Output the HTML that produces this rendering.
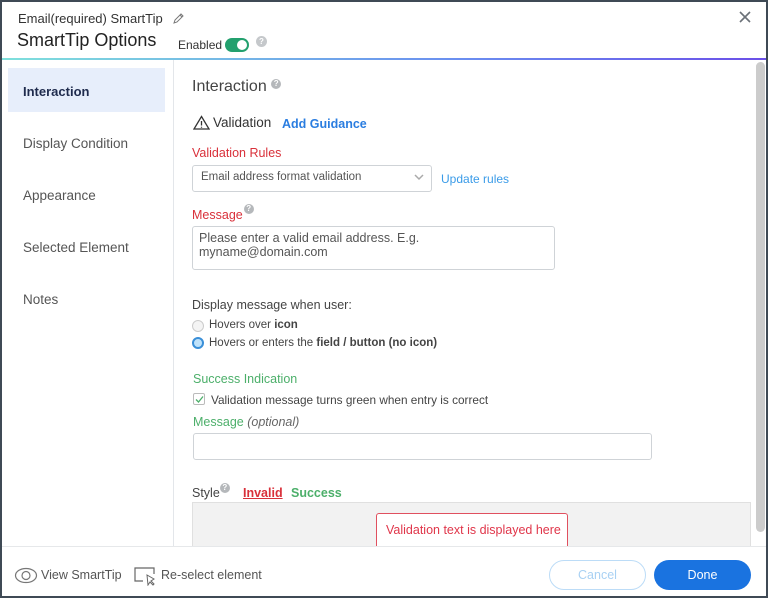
<!DOCTYPE html>
<html><head><meta charset="utf-8"><style>
*{box-sizing:border-box;margin:0;padding:0}
body{width:768px;height:598px;overflow:hidden;background:#fff;font-family:"Liberation Sans",sans-serif;color:#333;position:relative}
.frame{position:absolute;left:0;top:0;width:768px;height:598px;border:2px solid #3f4a55;border-bottom-width:2px}
.a{position:absolute;white-space:nowrap}
.grad{position:absolute;left:2px;top:58px;width:764px;height:2px;background:linear-gradient(90deg,#7fe0dc,#6a8ef0 60%,#6b4fe8)}
.side{position:absolute;left:2px;top:60px;width:172px;height:486px;border-right:1px solid #e3e6ea}
.nav{position:absolute;left:23px;font-size:13.5px;color:#555}
.red{color:#d9303a}
.grn{color:#4caf6a}
.blue{color:#2a86e8}
.inp{position:absolute;border:1px solid #cfd3d7;border-radius:3px;background:#fff}
.q{display:inline-block;width:10px;height:10px;border-radius:50%;background:#b5b8bb;color:#fff;font-size:8px;text-align:center;line-height:10px;font-weight:bold;vertical-align:top;font-style:normal}
</style></head><body>
<div class="frame"></div>
<div class="a" style="left:18px;top:11px;font-size:13px;color:#333;">Email(required) SmartTip</div>
<svg class="a" style="left:172px;top:12px" width="13" height="13" viewBox="0 0 13 13"><path d="M2 11 L3 8 L9 2 L11 4 L5 10 Z M8 3 L10 5" stroke="#777" fill="none" stroke-width="1"/></svg>
<div class="a" style="left:17px;top:30px;font-size:18px;color:#222;">SmartTip Options</div>
<div class="a" style="left:178px;top:38px;font-size:12px;color:#333;">Enabled</div>
<div class="a" style="left:225px;top:38px;width:24px;height:14px;border-radius:7px;background:#23a06e"><div style="position:absolute;right:2px;top:2px;width:10px;height:10px;border-radius:50%;background:#fff"></div></div>
<div class="a q" style="left:256px;top:36px;width:11px;height:11px;background:#c5c8cb;line-height:11px">?</div>
<svg class="a" style="left:738px;top:10px" width="14" height="14"><path d="M2 2 L12 12 M12 2 L2 12" stroke="#6b7178" stroke-width="1.6"/></svg>
<div class="grad"></div>
<div class="side"></div>
<div class="a" style="left:8px;top:68px;width:157px;height:44px;background:#e7eefb;"></div>
<div class="nav" style="top:84px;color:#1f2b4d;font-weight:bold;font-size:13px;">Interaction</div>
<div class="nav" style="top:136px">Display Condition</div>
<div class="nav" style="top:188px">Appearance</div>
<div class="nav" style="top:240px">Selected Element</div>
<div class="nav" style="top:292px">Notes</div>
<div class="a" style="left:756px;top:62px;width:9px;height:470px;border-radius:5px;background:#cccccc"></div>

<div class="a" style="left:192px;top:78px;font-size:16px;color:#444;">Interaction <span class="q" style="margin-top:1px">?</span></div>
<svg class="a" style="left:193px;top:115px" width="17" height="15"><path d="M8.5 1.5 L16 14 L1 14 Z" fill="none" stroke="#333" stroke-width="1.3"/><path d="M8.5 6 V10.5 M8.5 11.8 V12.8" stroke="#333" stroke-width="1.3"/></svg>
<div class="a" style="left:213px;top:115px;font-size:13.5px;color:#333;">Validation</div>
<div class="a blue" style="left:282px;top:117px;font-size:12.5px;font-weight:bold;color:#2a7de0">Add Guidance</div>
<div class="a red" style="left:192px;top:146px;font-size:12.5px;">Validation Rules</div>
<div class="inp" style="left:192px;top:165px;width:240px;height:27px;"></div>
<div class="a" style="left:201px;top:171px;font-size:11.5px;color:#555;">Email address format validation</div>
<svg class="a" style="left:414px;top:174px" width="10" height="7"><path d="M1 1 L5 5 L9 1" stroke="#aaa" stroke-width="1.5" fill="none"/></svg>
<div class="a" style="left:441px;top:172px;font-size:12px;color:#3a9be8;">Update rules</div>
<div class="a red" style="left:192px;top:208px;font-size:12.5px;">Message<span class="q" style="margin-top:-4px;margin-left:1px">?</span></div>
<div class="inp" style="left:192px;top:226px;width:363px;height:44px;"></div>
<div class="a" style="left:199px;top:231px;font-size:12.5px;color:#555;line-height:14px;">Please enter a valid email address. E.g.<br>myname@domain.com</div>
<div class="a" style="left:192px;top:298px;font-size:12.5px;color:#444;">Display message when user:</div>
<div class="a" style="left:192px;top:320px;width:12px;height:12px;border-radius:50%;border:1px solid #ccc;background:#f4f4f4"></div>
<div class="a" style="left:209px;top:319px;font-size:11.5px;color:#444;">Hovers over <b>icon</b></div>
<div class="a" style="left:192px;top:337px;width:12px;height:12px;border-radius:50%;border:2px solid #3a8fd8;background:#bfe2fa"></div>
<div class="a" style="left:209px;top:337px;font-size:11.5px;color:#444;">Hovers or enters the <b>field / button (no icon)</b></div>
<div class="a grn" style="left:193px;top:372px;font-size:12.5px;">Success Indication</div>
<div class="a" style="left:193px;top:393px;width:12px;height:12px;border:1px solid #bbb;border-radius:2px;"></div>
<svg class="a" style="left:195px;top:395px" width="9" height="9"><path d="M1 4.5 L3.5 7 L8 1.5" stroke="#4caf6a" stroke-width="1.3" fill="none"/></svg>
<div class="a" style="left:211px;top:393px;font-size:11.8px;color:#444;">Validation message turns green when entry is correct</div>
<div class="a grn" style="left:193px;top:415px;font-size:12.5px;">Message <i style="color:#666">(optional)</i></div>
<div class="inp" style="left:193px;top:433px;width:459px;height:27px;"></div>
<div class="a" style="left:192px;top:486px;font-size:12.5px;color:#444;">Style<span class="q" style="margin-top:-3px">?</span></div>
<div class="a" style="left:243px;top:486px;font-size:12.5px;color:#d9303a;font-weight:bold;text-decoration:underline;">Invalid</div>
<div class="a grn" style="left:291px;top:486px;font-size:12.5px;font-weight:bold;">Success</div>
<div class="a" style="left:192px;top:502px;width:559px;height:44px;background:#f2f2f2;border:1px solid #e0e0e0;border-bottom:none"></div>
<div class="a" style="left:376px;top:513px;width:192px;height:33px;background:#fff;border:1px solid #e0505f;border-bottom:none;border-radius:3px 3px 0 0"></div>
<div class="a" style="left:386px;top:523px;font-size:12.5px;color:#e0364a;">Validation text is displayed here</div>

<div class="a" style="left:2px;top:546px;width:764px;height:1px;background:#e6e8ea"></div>
<svg class="a" style="left:14px;top:567px" width="24" height="17"><ellipse cx="12" cy="8.5" rx="10.5" ry="7" stroke="#777" fill="none" stroke-width="1.2"/><circle cx="12" cy="8.5" r="4" stroke="#777" fill="none" stroke-width="1.2"/></svg>
<div class="a" style="left:41px;top:568px;font-size:12.5px;color:#555;">View SmartTip</div>
<svg class="a" style="left:133px;top:566px" width="25" height="20"><path d="M10 15 H2 V2 H21 V8" stroke="#666" fill="none" stroke-width="1.2"/><path d="M14 9 L15 19 L17 16 L20 19 L21 18 L18 15 L21 13 Z" stroke="#666" fill="#fff" stroke-width="1"/></svg>
<div class="a" style="left:161px;top:568px;font-size:12.5px;color:#555;">Re-select element</div>
<div class="a" style="left:549px;top:560px;width:97px;height:30px;border:1px solid #bcdcf7;border-radius:15px;color:#a9d1f3;font-size:12.5px;text-align:center;line-height:28px">Cancel</div>
<div class="a" style="left:654px;top:560px;width:97px;height:30px;background:#1a73e0;border-radius:15px;color:#fff;font-size:12.5px;text-align:center;line-height:30px">Done</div>
</body></html>
